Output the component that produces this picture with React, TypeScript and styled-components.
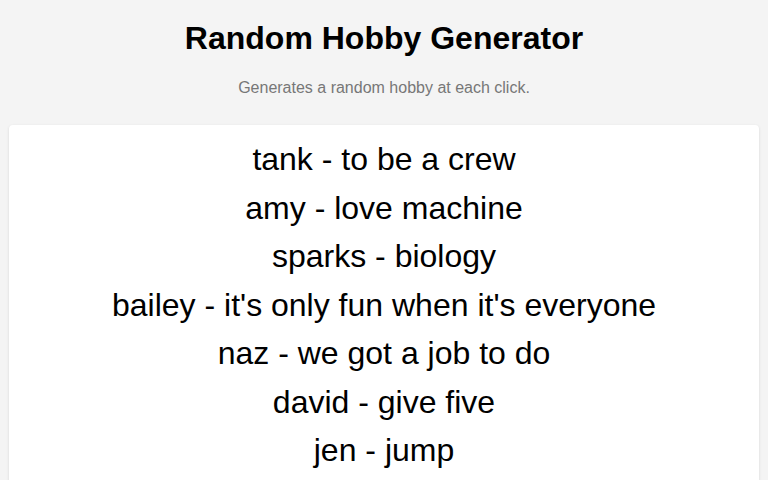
import React from 'react';
import styled, { createGlobalStyle } from 'styled-components';

const GlobalStyle = createGlobalStyle`
  body {
    margin: 0;
    background: #f4f4f4;
    font-family: "Liberation Sans", Arial, sans-serif;
  }
`;

const Page = styled.div`
  display: flex;
  flex-direction: column;
  align-items: stretch;
`;

const Title = styled.h1`
  margin: 20px 0 22px;
  font-size: 32px;
  font-weight: bold;
  line-height: 37px;
  text-align: center;
  color: #000;
`;

const Subtitle = styled.p`
  margin: 0 0 28px;
  font-size: 16px;
  line-height: 18px;
  text-align: center;
  color: #777;
`;

const Card = styled.div`
  margin: 0 9px;
  padding: 10px 0;
  background: #fff;
  border-radius: 4px;
  box-shadow: 0 1px 3px rgba(0, 0, 0, 0.12);
`;

const Entry = styled.div`
  font-size: 32px;
  line-height: 48.5px;
  text-align: center;
  color: #000;
`;

const hobbies = [
  { name: 'tank', hobby: 'to be a crew' },
  { name: 'amy', hobby: 'love machine' },
  { name: 'sparks', hobby: 'biology' },
  { name: 'bailey', hobby: "it's only fun when it's everyone" },
  { name: 'naz', hobby: 'we got a job to do' },
  { name: 'david', hobby: 'give five' },
  { name: 'jen', hobby: 'jump' },
];

export default function App() {
  return (
    <Page>
      <GlobalStyle />
      <Title>Random Hobby Generator</Title>
      <Subtitle>Generates a random hobby at each click.</Subtitle>
      <Card>
        {hobbies.map(h => (
          <Entry key={h.name}>
            {h.name} - {h.hobby}
          </Entry>
        ))}
      </Card>
    </Page>
  );
}
